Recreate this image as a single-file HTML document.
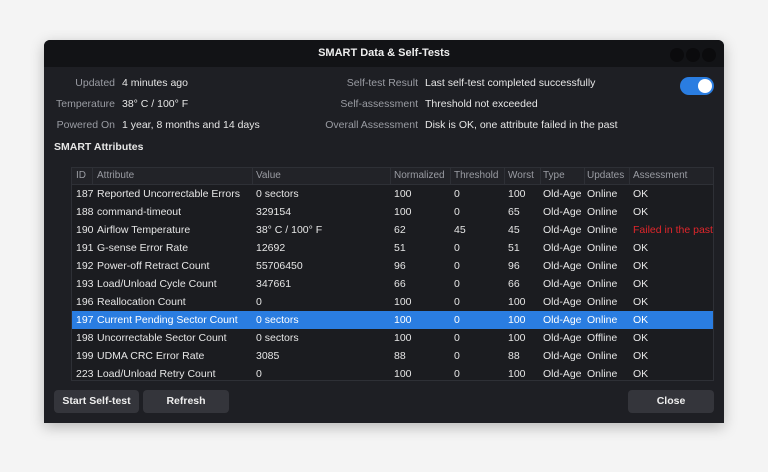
<!DOCTYPE html>
<html><head><style>
*{margin:0;padding:0;box-sizing:border-box}
body{width:768px;height:472px;background:#f4f4f4;font-family:"Liberation Sans",sans-serif;font-size:10.5px;color:#e6e6e6;position:relative;overflow:hidden}
.win{position:absolute;left:44px;top:40px;width:680px;height:383px;background:#1e1f24;border-radius:6px 6px 0 0;box-shadow:0 4px 14px rgba(0,0,0,.25);overflow:hidden}
.tb{height:27px;background:#121316;text-align:center;line-height:26px;font-weight:bold;font-size:11px;color:#eee;position:relative}
.dots{position:absolute;right:8px;top:6px}
.dots span{display:inline-block;width:14px;height:14px;border-radius:50%;background:#0b0b0d;margin-left:2px}
.t{position:absolute;white-space:nowrap}
.l{color:#9a9ca3;text-align:right}
.tbl{position:absolute;left:27px;top:127px;width:643px;height:214px;border:1px solid #2e3036;background:#1b1c20;overflow:hidden}
.hd{height:17px;background:#222328;color:#9a9ca3;position:relative;border-bottom:1px solid #2e3036}
.row{height:18px;position:relative}
.sel{background:#2a7de1;color:#fff}
.c{position:absolute;top:3px;white-space:nowrap}
.hd .c{top:2px;font-size:10px}
.sep{position:absolute;top:0;height:17px;width:1px;background:#2e3036}
.btn{position:absolute;top:350px;height:23px;background:#34353b;border-radius:4px;text-align:center;line-height:23px;font-weight:bold;font-size:10.5px;color:#eee}
.tog{position:absolute;left:636px;top:37px;width:34px;height:18px;border-radius:9px;background:#2a7de1}
.tog i{position:absolute;right:2px;top:2px;width:14px;height:14px;border-radius:50%;background:#fff}
</style></head><body>
<div class="win">
<div class="tb">SMART Data &amp; Self-Tests<div class="dots"><span></span><span></span><span></span></div></div>
<div class="t l" style="right:609px;top:37px">Updated</div><div class="t" style="left:78px;top:37px">4 minutes ago</div>
<div class="t l" style="right:609px;top:58px">Temperature</div><div class="t" style="left:78px;top:58px">38° C / 100° F</div>
<div class="t l" style="right:609px;top:79px">Powered On</div><div class="t" style="left:78px;top:79px">1 year, 8 months and 14 days</div>
<div class="t l" style="right:306px;top:37px">Self-test Result</div><div class="t" style="left:381px;top:37px">Last self-test completed successfully</div>
<div class="t l" style="right:306px;top:58px">Self-assessment</div><div class="t" style="left:381px;top:58px">Threshold not exceeded</div>
<div class="t l" style="right:306px;top:79px">Overall Assessment</div><div class="t" style="left:381px;top:79px">Disk is OK, one attribute failed in the past</div>
<div class="tog"><i></i></div>
<div class="t" style="left:10px;top:101px;font-weight:bold">SMART Attributes</div>
<div class="tbl">
<div class="hd">
<span class="c" style="left:4px">ID</span><span class="sep" style="left:20px"></span>
<span class="c" style="left:25px">Attribute</span><span class="sep" style="left:180px"></span>
<span class="c" style="left:184px">Value</span><span class="sep" style="left:318px"></span>
<span class="c" style="left:322px">Normalized</span><span class="sep" style="left:378px"></span>
<span class="c" style="left:382px">Threshold</span><span class="sep" style="left:432px"></span>
<span class="c" style="left:436px">Worst</span><span class="sep" style="left:468px"></span>
<span class="c" style="left:471px">Type</span><span class="sep" style="left:512px"></span>
<span class="c" style="left:515px">Updates</span><span class="sep" style="left:557px"></span>
<span class="c" style="left:561px">Assessment</span>
</div>
<div id="rows"></div>
</div>
<div class="btn" style="left:10px;width:85px">Start Self-test</div>
<div class="btn" style="left:99px;width:86px">Refresh</div>
<div class="btn" style="left:584px;width:86px">Close</div>
</div>
<script>
var d=[["187","Reported Uncorrectable Errors","0 sectors","100","0","100","Online","OK"],
["188","command-timeout","329154","100","0","65","Online","OK"],
["190","Airflow Temperature","38° C / 100° F","62","45","45","Online","Failed in the past"],
["191","G-sense Error Rate","12692","51","0","51","Online","OK"],
["192","Power-off Retract Count","55706450","96","0","96","Online","OK"],
["193","Load/Unload Cycle Count","347661","66","0","66","Online","OK"],
["196","Reallocation Count","0","100","0","100","Online","OK"],
["197","Current Pending Sector Count","0 sectors","100","0","100","Online","OK"],
["198","Uncorrectable Sector Count","0 sectors","100","0","100","Offline","OK"],
["199","UDMA CRC Error Rate","3085","88","0","88","Online","OK"],
["223","Load/Unload Retry Count","0","100","0","100","Online","OK"]];
var x=[4,25,184,322,382,436,471,515,561],h="";
d.forEach(function(r,i){h+='<div class="row'+(i==7?' sel':'')+'">';
var v=[r[0],r[1],r[2],r[3],r[4],r[5],"Old-Age",r[6],r[7]];
v.forEach(function(s,j){h+='<span class="c" style="left:'+x[j]+'px'+(j==8&&s!="OK"?';color:#e0262b':'')+'">'+s+'</span>'});h+='</div>'});
document.getElementById('rows').innerHTML=h;
</script>
</body></html>
